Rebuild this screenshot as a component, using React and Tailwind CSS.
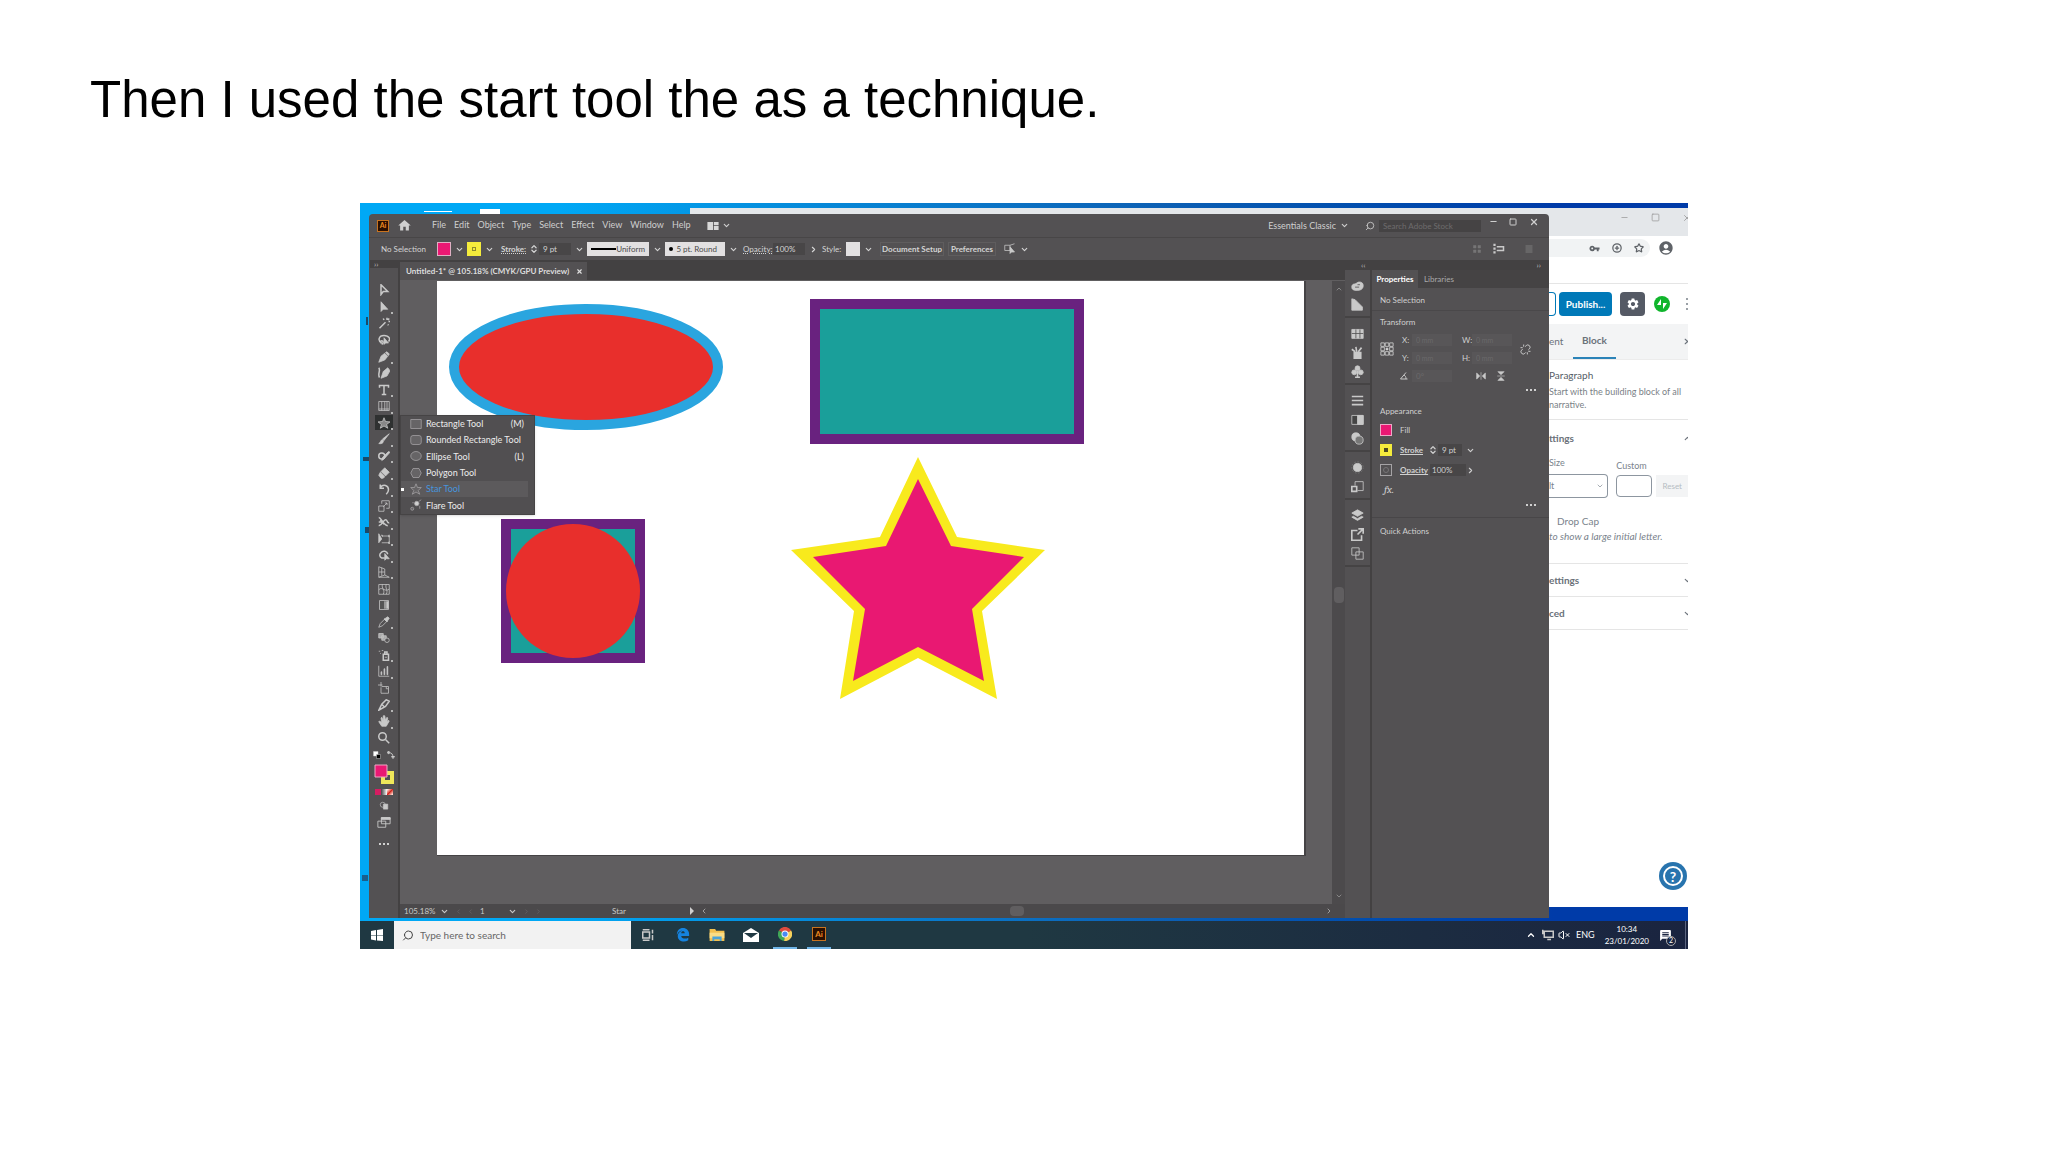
import React from "react";
import {
  ChevronDown,
  ChevronRight,
  ChevronUp,
  ChevronLeft,
  ChevronsUpDown,
  Star,
  CirclePlus,
  Search,
  X,
  Minus,
  Square,
  VolumeX,
  Unlink,
} from "lucide-react";
import {
  MdHome,
  MdVpnKey,
  MdAccountCircle,
  MdMessage,
  MdSettings,
} from "react-icons/md";

const menuItems = [
  "File",
  "Edit",
  "Object",
  "Type",
  "Select",
  "Effect",
  "View",
  "Window",
  "Help",
];

// Every tool glyph is drawn on a 16x16 grid
const tools = [
  { name: "Selection", art: <path d="M4 1v13l3-4h6z" fill="none" strokeWidth="2" /> },
  { name: "Direct Selection", more: true, art: <path d="M4 1v13l3-3h6z" /> },
  {
    name: "Magic Wand",
    art: (
      <path d="M2 15 10 7M12 1v3M14 6h2M7 2l1 2M13 10l1 1M15 2l-2 2" fill="none" strokeWidth="2" />
    ),
  },
  {
    name: "Lasso",
    art: (
      <>
        <path d="M5 12C-1 9 1 2 8 2s9 5 6 8M5 12c-2 0-2-3 0-3s3 3 0 5" fill="none" strokeWidth="2" />
        <path d="M8 5v9l2-2h4z" />
      </>
    ),
  },
  { name: "Pen", more: true, art: <path d="M1 15 4 7l5-4 4 4-4 5zM10 2l2-1 3 3-1 2z" /> },
  {
    name: "Curvature",
    art: (
      <>
        <path d="M1 1c3 4-2 8 1 13" fill="none" strokeWidth="2" />
        <path d="M4 15 7 6l6-5 3 4-4 7z" />
      </>
    ),
  },
  { name: "Type", more: true, art: <path d="M2 5V2h12v3M8 2v12M5 14h6" fill="none" strokeWidth="2" /> },
  {
    name: "Rectangular Grid",
    more: true,
    art: <path d="M1 2h14v12H1zM5 2v12M9 2v12M12 2v12M1 12h14" fill="none" />,
  },
  {
    name: "Star",
    more: true,
    active: true,
    art: <path d="M8 1l2 5 6 .5-4.500 3.500L13 15l-5-3-5 3 1.500-5L0 6.500 6 6z" fill="#888" />,
  },
  { name: "Paintbrush", more: true, art: <path d="M15 1 8 10l-2-2zM6 9c-3 0-2 4-5 5 4 1 7-1 6-4z" /> },
  {
    name: "Shaper",
    more: true,
    art: (
      <>
        <circle cx="5" cy="8" r="4" fill="none" strokeWidth="2" />
        <path d="M16 3 8 12l-3 2 1-4 8-8z" />
      </>
    ),
  },
  { name: "Eraser", more: true, art: <path d="M9 1l6 6-5 5-6-6zM3 7l6 6-2 2H4l-3-4z" /> },
  {
    name: "Rotate",
    more: true,
    art: <path d="M3 2v5h5M3 6c4-5 11-3 11 3 0 2-1 4-3 6" fill="none" strokeWidth="2" />,
  },
  {
    name: "Scale",
    more: true,
    art: <path d="M1 8h7v7H1zM5 5V1h10v10h-4M7 9l5-5M9 4h3v3" fill="none" />,
  },
  {
    name: "Width",
    more: true,
    art: <path d="M1 2c4 0 5 10 12 11M1 13C6 12 7 5 10 5s2 5 5 4M3 5l5 6M1 8h5" fill="none" strokeWidth="2" />,
  },
  {
    name: "Free Transform",
    more: true,
    art: (
      <>
        <path d="M1 1v12l4-5z" />
        <path d="M5 4h10v9H5M4 3h2v2M14 3h2v2h-2zM14 12h2v2h-2z" fill="none" />
      </>
    ),
  },
  {
    name: "Shape Builder",
    more: true,
    art: (
      <>
        <path d="M9 12H5a4 4 0 0 1-1-7 5 5 0 0 1 9 2" fill="none" strokeWidth="2" />
        <path d="M9 6v9l2-2h4z" />
      </>
    ),
  },
  {
    name: "Perspective Grid",
    more: true,
    art: <path d="M1 1v14h14M1 1l8 3v8L1 15M1 8h8M5 2v11M9 12l6 3" fill="none" />,
  },
  {
    name: "Mesh",
    art: <path d="M1 2h14v13H1zM1 9c5-5 8 4 14-1M6 2c-2 5 4 7 1 13M11 2c-2 5 3 7 0 13" fill="none" />,
  },
  {
    name: "Gradient",
    art: (
      <>
        <path d="M2 2h12v12H2z" fill="#555" />
        <path d="M8 3h3v10H8z" fill="#999" stroke="none" />
        <path d="M11 3h3v10h-3z" stroke="none" />
      </>
    ),
  },
  {
    name: "Eyedropper",
    more: true,
    art: (
      <>
        <path d="M1 15l2-5 6-6 3 3-6 6z" fill="none" />
        <path d="M8 4l2-1 3-2 2 2-2 3-1 2z" />
      </>
    ),
  },
  {
    name: "Blend",
    art: (
      <>
        <path d="M1 2h6v6H1zM5 5h6v6H5z" fill="#aaa" />
        <circle cx="12" cy="11" r="3" fill="#535153" />
      </>
    ),
  },
  {
    name: "Symbol Sprayer",
    more: true,
    art: (
      <>
        <path d="M7 7h7v8H7zM9 4h3v3H9z" fill="none" strokeWidth="2" />
        <path d="M1 3h2M5 2h2M3 6h1M9 11h3" />
      </>
    ),
  },
  {
    name: "Column Graph",
    more: true,
    art: (
      <>
        <path d="M1 1v14h14" fill="none" />
        <path d="M4 9h1v4H4zM8 5h1v8H8zM12 2h1v11h-1z" />
      </>
    ),
  },
  {
    name: "Artboard",
    art: <path d="M4 0v6M0 4h6M5 6h9v9H4V7M11 6v3h3" fill="none" />,
  },
  {
    name: "Slice",
    more: true,
    art: <path d="M1 15l4-8 6-6 4 2-5 7zM5 7l4 4" fill="none" strokeWidth="2" />,
  },
  {
    name: "Hand",
    more: true,
    art: <path d="M5 15 1 9l1-1 3 2-1-6 1-1 2 4V1h2l1 6 2-4 1 1-1 5 2-2 1 1-4 7z" />,
  },
  {
    name: "Zoom",
    art: (
      <>
        <circle cx="6" cy="6" r="5" fill="none" strokeWidth="2" />
        <path d="M10 10l5 5" strokeWidth="2" />
      </>
    ),
  },
];

const flyoutItems = [
  { label: "Rectangle Tool", shortcut: "(M)", art: <path d="M1 2h14v12H1z" /> },
  { label: "Rounded Rectangle Tool", art: <rect x="1" y="2" width="14" height="12" rx="3" /> },
  { label: "Ellipse Tool", shortcut: "(L)", art: <ellipse cx="8" cy="8" rx="7" ry="6" /> },
  { label: "Polygon Tool", art: <path d="M4 2h8l3 6-3 6H4L1 8z" /> },
  {
    label: "Star Tool",
    selected: true,
    art: <path d="M8 1l2 5h5l-4 4 2 5-5-3-5 3 2-5-4-4h5z" />,
  },
  {
    label: "Flare Tool",
    art: (
      <>
        <circle cx="9" cy="6" r="3" fill="#d0d0d0" />
        <circle cx="3" cy="13" r="2" />
        <path d="M12 3l3-2M13 9v4M3 5h2" />
      </>
    ),
  },
];

const dockGroups = [
  [
    {
      name: "Color",
      art: (
        <>
          <path d="M1 10c0-5 4-3 6-5s8-2 8 3-4 6-8 6-6-1-6-4z" />
          <path d="M5 10h5M8 7h3" stroke="#535153" />
        </>
      ),
    },
    { name: "Color Guide", art: <path d="M1 1l4 1 9 9v4H1z" /> },
  ],
  [
    {
      name: "Swatches",
      art: (
        <>
          <path d="M1 3h14v11H1z" />
          <path d="M1 8h14M6 3v11M11 3v11" stroke="#535153" />
        </>
      ),
    },
    { name: "Brushes", art: <path d="M4 8h8v7H4zM7 7 6 1M9 7l4-5M5 7 1 4" strokeWidth="2" /> },
    {
      name: "Symbols",
      art: (
        <>
          <circle cx="8" cy="4" r="3" />
          <circle cx="4" cy="9" r="3" />
          <circle cx="12" cy="9" r="3" />
          <path d="M8 7v7M5 15h6" strokeWidth="2" />
        </>
      ),
    },
  ],
  [
    { name: "Stroke", art: <path d="M1 3h14M1 8h14M1 13h14" strokeWidth="2" /> },
    {
      name: "Gradient",
      art: (
        <>
          <path d="M1 3h14v11H1z" fill="#444" />
          <path d="M8 3h7v11H8z" />
        </>
      ),
    },
    {
      name: "Transparency",
      art: (
        <>
          <circle cx="6" cy="6" r="5" />
          <circle cx="10" cy="10" r="5" fill="#777" />
        </>
      ),
    },
  ],
  [
    {
      name: "Appearance",
      art: (
        <>
          <circle cx="8" cy="8" r="7" fill="none" stroke="#777" strokeDasharray="2 2" />
          <circle cx="8" cy="8" r="5" />
        </>
      ),
    },
    {
      name: "Graphic Styles",
      art: (
        <>
          <path d="M5 7V2h10v11H8" fill="none" />
          <path d="M1 8h6v6H1z" fill="none" strokeWidth="2" />
        </>
      ),
    },
  ],
  [
    { name: "Layers", art: <path d="M8 1l7 4-7 4-7-4zM1 10l7 4 7-4-2-1-5 3-5-3z" /> },
    { name: "Asset Export", art: <path d="M8 3H1v12h12V9M9 1h6v6M15 1 8 8" fill="none" strokeWidth="2" /> },
    { name: "Artboards", art: <path d="M1 1h9v9H1zM6 6h9v9H6z" fill="none" /> },
  ],
];

const Glyph = ({ children, className = "size-3" }) => (
  <svg viewBox="0 0 16 16" className={className} fill="#c9c9c9" stroke="#c9c9c9">
    {children}
  </svg>
);

const Dots = () => (
  <svg viewBox="0 0 12 3" className="h-[3px] w-3" fill="#d0d0d0">
    <path d="M1 0h2v2H1zM5 0h2v2H5zM9 0h2v2H9z" />
  </svg>
);

const Chevron = () => (
  <button aria-label="More options" className="flex w-4 shrink-0 justify-center">
    <ChevronDown size={9} strokeWidth={3} />
  </button>
);

const AiLogo = ({ className }) => (
  <span
    className={`flex items-center justify-center border border-[#c8731f] bg-[#2b0f00] font-bold text-[#f08a20] ${className}`}
  >
    Ai
  </span>
);

const TitleBar = () => (
  <header className="flex h-6 shrink-0 items-center border-b border-[#484647] pl-2 text-[9px] text-[#cfcfcf]">
    <AiLogo className="size-3 text-[7px]" />
    <button aria-label="Home" className="ml-2 w-5">
      <MdHome size={15} />
    </button>
    <nav className="mb-px ml-[15px] flex gap-2">
      {menuItems.map((item) => (
        <button key={item}>{item}</button>
      ))}
    </nav>
    <svg viewBox="0 0 14 10" className="ml-4 h-2 w-3" fill="#d8d8d8">
      <path d="M0 0h7v10H0zM8 0h6v4H8zM8 5h6v5H8z" />
    </svg>
    <Chevron />
    <button className="ml-auto flex items-center gap-1">
      Essentials Classic
      <ChevronDown size={9} strokeWidth={3} />
    </button>
    <label className="ml-4 flex items-center gap-1 pr-2">
      <Search size={10} className="-scale-x-100" />
      <input
        aria-label="Search Adobe Stock"
        placeholder="Search Adobe Stock"
        className="h-3 w-[102px] bg-[#454344] px-1 text-[8px] placeholder:text-[#6e6c6d]"
      />
    </label>
    <div className="mb-2 flex gap-2 pr-2">
      <button aria-label="Minimize" className="w-3">
        <Minus size={9} strokeWidth={3} />
      </button>
      <button aria-label="Maximize" className="w-3">
        <Square size={8} strokeWidth={3} />
      </button>
      <button aria-label="Close" className="w-3">
        <X size={10} strokeWidth={3} />
      </button>
    </div>
  </header>
);

const ControlBar = () => (
  <div className="flex h-[22px] shrink-0 items-center pl-3 text-[8px] whitespace-nowrap text-[#d4d4d4]">
    <span className="w-14">No Selection</span>
    <button aria-label="Fill" className="size-[14px] border border-[#e0b0c4] bg-[#ea1873]" />
    <Chevron />
    <button
      aria-label="Stroke color"
      className="flex size-[14px] items-center justify-center bg-[#f5ec3c]"
    >
      <span className="size-1 border border-[#8d8a2e]" />
    </button>
    <Chevron />
    <label htmlFor="stroke" className="ml-1 w-7 font-bold underline decoration-dotted">
      Stroke:
    </label>
    <ChevronsUpDown size={10} strokeWidth={3} />
    <input id="stroke" defaultValue="9 pt" className="h-3 w-8 bg-[#484647] px-1" />
    <Chevron />
    <button className="flex h-[14px] w-[62px] items-center justify-between bg-[#e2e0e1] px-1 text-[#4a4a4a]">
      <span className="h-[2px] w-7 bg-black" />
      Uniform
    </button>
    <Chevron />
    <button className="flex h-[14px] w-[60px] items-center justify-between bg-[#e2e0e1] px-1 pr-2 text-[#4a4a4a]">
      <span className="size-1 rounded-full bg-black" />5 pt. Round
    </button>
    <Chevron />
    <label htmlFor="opacity" className="w-8 pl-[2px] underline decoration-dotted">
      Opacity:
    </label>
    <input id="opacity" defaultValue="100%" className="h-3 w-8 bg-[#484647] px-[2px]" />
    <ChevronRight size={9} strokeWidth={3} className="ml-1" />
    <span className="ml-1 w-6">Style:</span>
    <button aria-label="Graphic style" className="size-[14px] bg-[#e2e0e1]" />
    <Chevron />
    <button className="ml-1 h-[14px] w-16 border border-[#5f5d5e] font-bold">Document Setup</button>
    <button className="ml-1 h-[14px] w-12 border border-[#5f5d5e] font-bold">Preferences</button>
    <button aria-label="Select similar" className="ml-2">
      <Glyph>
        <path d="M1 3h7v7H1zM8 3l6-2" fill="none" />
        <path d="M8 5v9l2-2h4z" />
      </Glyph>
    </button>
    <Chevron />
    <div className="ml-auto flex items-center gap-3 pr-4">
      <Glyph className="size-2 opacity-30">
        <path d="M1 1h5v5H1zM10 1h5v5h-5zM1 10h5v5H1zM10 10h5v5h-5z" />
      </Glyph>
      <Glyph className="mr-2 size-3">
        <path d="M2 1v14" strokeWidth="3" strokeDasharray="3 2" />
        <path d="M5 5h9v5H5" fill="none" strokeWidth="2" />
      </Glyph>
      <Glyph className="size-2 opacity-70">
        <path d="M1 2h14M1 6h14M1 10h14M1 14h14" />
      </Glyph>
    </div>
  </div>
);

const ToolFlyout = () => (
  <ul
    role="menu"
    className="absolute top-0 left-full z-10 ml-[7px] grid h-[100px] w-[135px] grid-rows-6 border border-[#464445] bg-[#514f51] text-[9px] text-[#ececec] shadow"
  >
    {flyoutItems.map(({ label, shortcut, selected, art }) => (
      <li key={label} className="flex">
        <button
          role="menuitem"
          className={`flex w-[127px] items-center text-left ${
            selected ? "bg-[#5c5a5c] text-[#4795dc]" : ""
          }`}
        >
          <span className="flex w-[9px] shrink-0">
            {selected && <span className="size-[3px] bg-white" />}
          </span>
          <svg viewBox="0 0 16 16" className="mr-1 size-3" fill="#666466" stroke="#a5a3a5">
            {art}
          </svg>
          <span className="whitespace-nowrap">{label}</span>
          {shortcut && <span className="mr-1 ml-auto">{shortcut}</span>}
        </button>
      </li>
    ))}
  </ul>
);

const Toolbar = () => (
  <aside className="flex w-[31px] shrink-0 flex-col items-center border-r-2 border-[#434142] pl-px">
    <div className="h-2 w-full bg-[#434142] pl-1 text-[8px] leading-[8px] text-[#bdbdbd]">››</div>
    <div className="mt-[14px] grid h-[464px] grid-rows-28">
      {tools.map(({ name, art, more, active }) => (
        <div key={name} className="relative flex items-center">
          <button
            aria-label={name}
            className={`relative flex h-[15px] w-[18px] items-center justify-center ${
              active ? "bg-[#2f3131]" : ""
            }`}
          >
            <Glyph>{art}</Glyph>
            {more && <span className="absolute right-0 bottom-0 size-[2px] bg-[#b5b5b5]" />}
          </button>
          {active && <ToolFlyout />}
        </div>
      ))}
    </div>
    <div className="mt-[5px] flex gap-[6px]">
      <Glyph className="size-2">
        <path d="M1 1h9v9H1z" fill="#fff" />
        <path d="M7 7h8v8H7z" fill="#000" />
      </Glyph>
      <Glyph className="size-2">
        <path d="M2 3c7 0 10 3 10 10M0 3l4-3v6zM9 11h6l-3 4z" fill="none" strokeWidth="2" />
      </Glyph>
    </div>
    <svg viewBox="0 0 20 20" className="mt-[5px] size-5">
      <path d="M9 9h9v9H9z" fill="#514f51" stroke="#f0e75a" strokeWidth="4" />
      <path d="M1 1h12v12H1z" fill="#ea1873" stroke="#eda9c6" />
    </svg>
    <div className="mt-[5px] flex h-[6px] w-[18px]">
      <span className="w-[6px] bg-[#d51d62]" />
      <span className="w-[6px] bg-gradient-to-r from-[#444] to-white" />
      <span className="w-[6px] bg-gradient-to-br from-white via-[#d02020] to-white" />
    </div>
    <Glyph className="mt-[6px] size-[10px]">
      <circle cx="6" cy="6" r="4" fill="none" />
      <path d="M7 5h7v8H7z" />
    </Glyph>
    <Glyph className="mt-1 size-[14px]">
      <path d="M1 7h9v7H1zM5 3h10v7H5z" fill="none" />
      <path d="M5 3h10v2H5z" />
    </Glyph>
    <button aria-label="Edit toolbar" className="mt-[14px]">
      <Dots />
    </button>
  </aside>
);

const Artboard = () => (
  <div className="flex min-h-0 flex-1 bg-[#605e60] pt-px">
    <div className="mr-[26px] mb-[48px] ml-[37px] flex-1 border-r-2 border-b border-[#454345] bg-white">
      <svg viewBox="0 0 867 574" preserveAspectRatio="xMinYMin meet" className="h-full w-full">
        <ellipse cx="149" cy="86" rx="132" ry="58" fill="#e82f2c" stroke="#2aa5df" strokeWidth="10" />
        <rect x="378" y="23" width="264" height="135" fill="#1a9f9a" stroke="#69227f" strokeWidth="10" />
        <rect x="69" y="243" width="134" height="134" fill="#1a9f9a" stroke="#69227f" strokeWidth="10" />
        <circle cx="136" cy="310" r="67" fill="#e82f2c" />
        <polygon
          points="481,176 520,256 608,269 545,330 560,418 481,377 403,418 417,330 354,269 443,256"
          fill="#f8ea1d"
        />
        <polygon
          points="481,198 514,265 587,276 535,328 547,400 481,366 416,400 428,328 376,276 449,265"
          fill="#e91872"
        />
      </svg>
    </div>
    <div className="flex w-[13px] flex-col items-center justify-between bg-[#4c4a4c] pt-1 text-[#a5a5a5]">
      <ChevronUp size={8} />
      <span className="mt-1 h-4 w-[10px] rounded bg-[#605e60]" />
      <ChevronDown size={8} className="mb-1" />
    </div>
  </div>
);

const StatusBar = () => (
  <footer className="flex h-[14px] shrink-0 items-center bg-[#4b494b] pl-1 text-[8px] text-[#c9c9c9]">
    <input aria-label="Zoom level" defaultValue="105.18%" className="h-3 w-8" />
    <Chevron />
    <span className="flex w-6 justify-around text-[#6c6a6c]">
      <ChevronLeft size={7} />
      <ChevronLeft size={7} />
    </span>
    <input aria-label="Artboard number" defaultValue="1" className="h-3 w-7 px-1" />
    <Chevron />
    <span className="flex w-6 justify-around text-[#6c6a6c]">
      <ChevronRight size={7} />
      <ChevronRight size={7} />
    </span>
    <span className="ml-17 w-19">Star</span>
    <svg viewBox="0 0 8 8" className="size-2" fill="#d0d0d0">
      <path d="M2 0l4 4-4 4z" />
    </svg>
    <ChevronLeft size={8} className="ml-1" />
    <div className="flex flex-1 justify-center">
      <span className="h-[10px] w-[14px] rounded-sm bg-[#605e60]" />
    </div>
    <ChevronRight size={8} className="mr-3" />
  </footer>
);

const Dock = () => (
  <aside className="w-[27px] shrink-0 border-r-2 border-[#434142]">
    {dockGroups.map((group, i) => (
      <div
        key={i}
        className="flex flex-col items-center gap-[6px] border-b-2 border-[#454344] pt-[9px] pb-[5px]"
      >
        {group.map(({ name, art }) => (
          <button key={name} aria-label={name}>
            <Glyph className="size-[13px]">{art}</Glyph>
          </button>
        ))}
      </div>
    ))}
  </aside>
);

const TransformField = ({ label, value }) => (
  <label className="flex items-center gap-[2px]">
    <span className="w-2">{label}</span>
    <input
      defaultValue={value}
      className="h-3 w-10 bg-[#585658] px-1 text-[7px] text-[#6b696b]"
    />
  </label>
);

const PropertiesPanel = () => (
  <aside className="flex w-[177px] shrink-0 flex-col text-[8px] leading-3 text-[#d0d0d0]">
    <div className="flex h-[18px] shrink-0 bg-[#454344]">
      <button className="w-[46px] bg-[#535153] font-bold text-white">Properties</button>
      <button className="ml-[6px] text-[#aaa]">Libraries</button>
    </div>
    <p className="mt-[6px] ml-2">No Selection</p>
    <section className="mt-1 h-[85px] border-t border-[#4a484a] pt-[5px] pl-2">
      <h2>Transform</h2>
      <div className="mt-[6px] flex items-center">
        <Glyph className="size-[14px]">
          <path d="M1 1h4v4H1zM6 1h4v4H6zM11 1h4v4h-4zM1 6h4v4H1zM11 6h4v4h-4zM1 11h4v4H1zM6 11h4v4H6zM11 11h4v4h-4z" fill="none" />
          <path d="M7 7h2v2H7z" fill="#fff" />
        </Glyph>
        <div className="ml-2 grid grid-cols-2 gap-x-[10px] gap-y-[6px]">
          <TransformField label="X:" value="0 mm" />
          <TransformField label="W:" value="0 mm" />
          <TransformField label="Y:" value="0 mm" />
          <TransformField label="H:" value="0 mm" />
        </div>
        <Unlink size={11} className="ml-2" />
      </div>
      <div className="mt-[6px] flex items-center pl-5">
        <Glyph className="size-2">
          <path d="M12 1 1 14h14M8 6c3 2 4 4 4 8" fill="none" strokeWidth="2" />
        </Glyph>
        <input aria-label="Rotate" defaultValue="0°" className="ml-1 h-3 w-10 bg-[#585658] px-1 text-[#6b696b]" />
        <button aria-label="Flip horizontal" className="ml-6">
          <Glyph className="size-[10px]">
            <path d="M1 3l5 5-5 5zM15 3l-5 5 5 5zM8 2v12" />
          </Glyph>
        </button>
        <button aria-label="Flip vertical" className="ml-[10px]">
          <Glyph className="size-[10px]">
            <path d="M3 1l5 5 5-5zM3 15l5-5 5 5zM2 8h12" />
          </Glyph>
        </button>
      </div>
    </section>
    <section className="relative h-[123px] border-b border-[#484648] pl-2">
      <button aria-label="Transform options" className="absolute -top-[6px] right-3">
        <Dots />
      </button>
      <h2 className="pt-[10px]">Appearance</h2>
      <div className="mt-[7px] flex h-3 items-center">
        <button aria-label="Fill color" className="mr-2 size-3 border border-[#eda9c6] bg-[#ea1873]" />
        Fill
      </div>
      <div className="mt-2 flex h-3 items-center">
        <button aria-label="Stroke color" className="mr-2 flex size-3 items-center justify-center bg-[#f5ec3c]">
          <span className="size-1 bg-[#4c4a20]" />
        </button>
        <label htmlFor="panel-stroke" className="w-7 font-bold underline">
          Stroke
        </label>
        <ChevronsUpDown size={10} strokeWidth={3} />
        <input id="panel-stroke" defaultValue="9 pt" className="h-3 w-6 bg-[#484647] px-1" />
        <Chevron />
      </div>
      <div className="mt-2 flex h-3 items-center">
        <span className="mr-2 flex size-3 items-center justify-center border border-[#a5a3a5]">
          <span className="size-[6px] rounded-full border border-[#777577]" />
        </span>
        <label htmlFor="panel-opacity" className="w-[30px] font-bold underline">
          Opacity
        </label>
        <input id="panel-opacity" defaultValue="100%" className="h-3 w-9 bg-[#484647] px-[2px]" />
        <ChevronRight size={9} strokeWidth={3} />
      </div>
      <button className="mt-2 ml-1 font-serif text-[11px] italic">fx.</button>
      <button aria-label="Appearance options" className="absolute right-3 bottom-[10px]">
        <Dots />
      </button>
    </section>
    <h2 className="mt-[7px] ml-2">Quick Actions</h2>
  </aside>
);

const Illustrator = () => (
  <div className="absolute top-[11px] right-[139px] bottom-[31px] left-[9px] flex flex-col overflow-hidden rounded-t-sm bg-[#535153]">
    <TitleBar />
    <ControlBar />
    <div className="flex min-h-0 flex-1">
      <Toolbar />
      <div className="flex min-w-0 flex-1 flex-col">
        <div className="flex h-5 shrink-0 items-end bg-[#434142]">
          <button className="flex h-[18px] w-[187px] items-center justify-between bg-[#535153] px-1 pl-[6px] text-[8px] font-bold text-[#dedede]">
            <span className="whitespace-nowrap">Untitled-1* @ 105.18% (CMYK/GPU Preview)</span>
            <X size={7} strokeWidth={4} />
          </button>
        </div>
        <Artboard />
        <StatusBar />
      </div>
      <div className="flex flex-col">
        <div className="flex h-[10px] shrink-0 items-center justify-between bg-[#434142] pr-2 pl-4 text-[8px] text-[#bdbdbd]">
          <span>‹‹</span>
          <span>››</span>
        </div>
        <div className="flex flex-1">
          <Dock />
          <PropertiesPanel />
        </div>
      </div>
    </div>
  </div>
);

const SettingsHeading = ({ label, open }) => (
  <button className="flex h-8 w-full items-center justify-between text-[10px] font-bold text-[#6b727a]">
    {label}
    {open ? (
      <ChevronUp size={9} strokeWidth={3} className="-mr-1" />
    ) : (
      <ChevronDown size={9} strokeWidth={3} className="-mr-1" />
    )}
  </button>
);

const Browser = () => (
  <div className="absolute top-[5px] right-0 bottom-[42px] left-[330px] overflow-hidden bg-white">
    <div className="flex h-7 items-start justify-end gap-[22px] bg-[#e4e7ea] pt-[5px] text-[#999]">
      <Minus size={9} />
      <Square size={9} />
      <X size={10} className="-mr-[4px]" />
    </div>
    <div className="flex h-6 items-center justify-end text-[#5f6368]">
      <div className="flex h-[18px] flex-1 items-center justify-end gap-3 rounded-full bg-[#f1f3f4] pr-[6px]">
        <MdVpnKey size={11} />
        <CirclePlus size={10} strokeWidth={3} />
        <Star size={10} strokeWidth={3} />
      </div>
      <MdAccountCircle size={16} className="mr-[14px] ml-2" />
    </div>
    <div className="ml-auto w-[139px]">
      <div className="mt-[23px] flex h-[41px] items-center border-t border-[#e5e5e5] text-[#555d66]">
        <span className="h-6 w-[7px] rounded-r-sm border border-l-0 border-[#0079b8]" />
        <button className="ml-[3px] h-6 w-[53px] shrink-0 rounded-sm bg-[#0079b8] text-[10px] font-bold text-white">
          Publish...
        </button>
        <button
          aria-label="Settings"
          className="ml-2 flex h-6 w-[25px] shrink-0 items-center justify-center rounded-sm bg-[#555a65] text-white"
        >
          <MdSettings size={14} />
        </button>
        <svg viewBox="0 0 16 16" className="ml-[9px] size-4 shrink-0">
          <circle cx="8" cy="8" r="8" fill="#10b52c" />
          <path d="M7 3v6H3zM9 13V7h4z" fill="#fff" />
        </svg>
        <svg viewBox="0 0 2 14" className="ml-auto h-[14px] w-[2px]" fill="#9aa0a6">
          <path d="M0 1h2v2H0zM0 6h2v2H0zM0 11h2v2H0z" />
        </svg>
      </div>
      <div className="flex h-9 border-b border-[#ececec] bg-[#f3f4f5] text-[10px] font-bold text-[#6b727a]">
        <button className="w-6 text-left font-normal">ent</button>
        <button className="w-[43px] border-b-2 border-[#2b83b8]">Block</button>
        <button aria-label="Close settings" className="-mr-1 ml-auto">
          <X size={9} strokeWidth={3} />
        </button>
      </div>
      <div className="h-[60px] border-b border-[#e5e5e5] pt-[9px] text-[9px] leading-[13px] text-[#7a7f86]">
        <h3 className="mb-[3px] text-[10px] leading-[13px] text-[#555d66]">Paragraph</h3>
        <p>Start with the building block of all narrative.</p>
      </div>
      <div className="h-[144px] border-b border-[#e5e5e5] pt-[2px] text-[9px] text-[#7a838c]">
        <SettingsHeading label="ttings" open />
        <div className="flex items-end pt-[2px]">
          <label className="w-[62px]">
            Size
            <span className="relative mt-1 block">
              <select className="block h-6 w-full appearance-none rounded-r-sm border border-l-0 border-[#8d96a0] bg-white">
                <option>lt</option>
              </select>
              <ChevronDown size={8} className="absolute top-2 right-1" />
            </span>
          </label>
          <label className="mb-px ml-2 w-[38px]">
            Custom
            <input className="mt-[2px] block h-[22px] w-full rounded-sm border border-[#8d96a0]" />
          </label>
          <button className="mb-px ml-1 h-[22px] bg-[#f3f4f5] px-[6px] text-[8px] text-[#b5bcc2]">
            Reset
          </button>
        </div>
        <p className="mt-4 pl-2 text-[10px] leading-[15px]">Drop Cap</p>
        <p className="text-[10px] leading-[15px] whitespace-nowrap italic">
          to show a large initial letter.
        </p>
      </div>
      <div className="border-b border-[#e5e5e5]">
        <SettingsHeading label="ettings" />
      </div>
      <div className="border-b border-[#e5e5e5]">
        <SettingsHeading label="ced" />
      </div>
    </div>
    <button
      aria-label="Help"
      className="absolute right-px bottom-[17px] flex size-7 items-center justify-center rounded-full bg-[#2874ae] text-white"
    >
      <span className="flex size-5 items-center justify-center rounded-full border-2 border-white text-[14px] font-bold">
        ?
      </span>
    </button>
  </div>
);

const Taskbar = () => (
  <div className="absolute inset-x-0 bottom-0 flex h-7 bg-gradient-to-r from-[#1f3842] from-50% to-[#1a2440] text-[9px] text-white">
    <button aria-label="Start" className="flex w-[34px] items-center justify-center">
      <svg viewBox="0 0 12 12" className="size-3" fill="#fff">
        <path d="M0 2l5-1v5H0zM6 1l6-1v6H6zM0 6.500h5v5L0 10.500zM6 6.500h6V12l-6-.5z" />
      </svg>
    </button>
    <label className="flex w-[237px] items-center gap-[6px] bg-[#f2f2f2] pl-2 text-[#444]">
      <Search size={13} className="-scale-x-100" />
      <input
        aria-label="Search"
        placeholder="Type here to search"
        className="w-full text-[10px] placeholder:text-[#666]"
      />
    </label>
    <div className="flex">
      <button aria-label="Task view" className="flex w-[34px] items-center justify-center">
        <Glyph className="size-3">
          <path d="M1 4h9v8H1zM1 1h9M1 15h9M14 1v5M14 8v7" fill="none" strokeWidth="2" />
        </Glyph>
      </button>
      <button aria-label="Edge" className="flex w-[35px] items-center justify-center text-[#1583e0]">
        <svg viewBox="0 0 16 16" className="size-[14px]" fill="currentColor">
          <path d="M1 8C1 3 4 0 8 0s7 3 7 7v2H6c0 3 5 4 8 2v3c-5 3-12 1-12-5 0-3 2-5 5-6-4 0-5 3-6 5zM6 6h4c0-3-4-3-4 0z" />
        </svg>
      </button>
      <button aria-label="File Explorer" className="flex w-[34px] items-center justify-center">
        <svg viewBox="0 0 16 13" className="h-3 w-4">
          <path d="M0 0h6l1 2h9v11H0z" fill="#f3c04e" />
          <path d="M0 4h16v6H0z" fill="#fadd85" />
          <path d="M3 13V8h10v5h-2v-2H5v2z" fill="#4aa3d8" />
        </svg>
      </button>
      <button aria-label="Mail" className="flex w-[34px] items-center justify-center">
        <svg viewBox="0 0 16 14" className="h-[14px] w-4">
          <path d="M0 5l8-5 8 5v9H0z" fill="#fff" />
          <path d="M1 5h14l-7 5z" fill="#1f3842" />
        </svg>
      </button>
      <button
        aria-label="Chrome"
        className="mr-[10px] ml-[5px] flex w-6 items-center justify-center border-b-2 border-[#6fb5e8]"
      >
        <svg viewBox="0 0 16 16" className="size-[14px]">
          <path d="M8 8 1 4a8 8 0 0 1 14 0z" fill="#dd4b3e" />
          <path d="M8 8 1 4a8 8 0 0 0 6 12z" fill="#3fa757" />
          <path d="M8 8l7-4a8 8 0 0 1-8 12z" fill="#f7d25c" />
          <circle cx="8" cy="8" r="4" fill="#fff" />
          <circle cx="8" cy="8" r="3" fill="#4a8af4" />
        </svg>
      </button>
      <button
        aria-label="Illustrator"
        className="flex w-6 items-center justify-center border-b-2 border-[#6fb5e8]"
      >
        <AiLogo className="size-[14px] text-[8px]" />
      </button>
    </div>
    <div className="ml-auto flex items-center">
      <ChevronUp size={10} strokeWidth={3} />
      <Glyph className="ml-[6px] size-3">
        <path d="M3 3h12v8H3zM7 14h5M1 1v5h3" fill="none" strokeWidth="2" />
      </Glyph>
      <VolumeX size={12} className="ml-1" />
      <span className="ml-[6px]">ENG</span>
      <time className="ml-[10px] text-center text-[8px] leading-3">
        10:34
        <br />
        23/01/2020
      </time>
      <button aria-label="2 notifications" className="relative mr-[13px] ml-[10px]">
        <MdMessage size={13} />
        <span className="absolute -right-1 -bottom-1 flex size-[10px] items-center justify-center rounded-full border border-[#aaa] bg-[#1a2440] text-[7px]">
          2
        </span>
      </button>
      <span className="mr-[2px] h-7 w-px bg-[#5b6580]" />
    </div>
  </div>
);

// Icons left on the desktop, mostly hidden behind the windows
const DesktopIcons = () => (
  <div className="absolute inset-0">
    <span className="absolute top-2 left-16 h-px w-7 bg-white" />
    <span className="absolute top-[6px] left-[120px] h-[5px] w-5 bg-white" />
    <span className="absolute top-[114px] left-[6px] h-2 w-[2px] bg-[#1a4a6a]" />
    <span className="absolute top-[254px] left-[3px] h-1 w-[6px] bg-[#1a4a6a]" />
    <span className="absolute top-[324px] left-[5px] h-[6px] w-1 bg-[#1a4a6a]" />
    <span className="absolute top-[672px] left-[2px] h-[6px] w-[6px] bg-[#1a5f8c]" />
  </div>
);

function App() {
  return (
    <main className="min-h-screen bg-white">
      <h1 className="px-[90px] pt-[70px] font-['Liberation_Sans',Arial,sans-serif] text-[51px] leading-[60px] text-black">
        Then I used the start tool the as a technique.
      </h1>
      <div className="relative mx-auto mt-[73px] h-[746px] w-full max-w-[1328px] overflow-hidden bg-gradient-to-r from-[#00a8f5] from-15% via-[#0d60b4] via-60% to-[#003ba8] to-90% font-[Lato,'Open_Sans',sans-serif]">
        <DesktopIcons />
        <Browser />
        <Illustrator />
        <Taskbar />
      </div>
    </main>
  );
}

export default App;
